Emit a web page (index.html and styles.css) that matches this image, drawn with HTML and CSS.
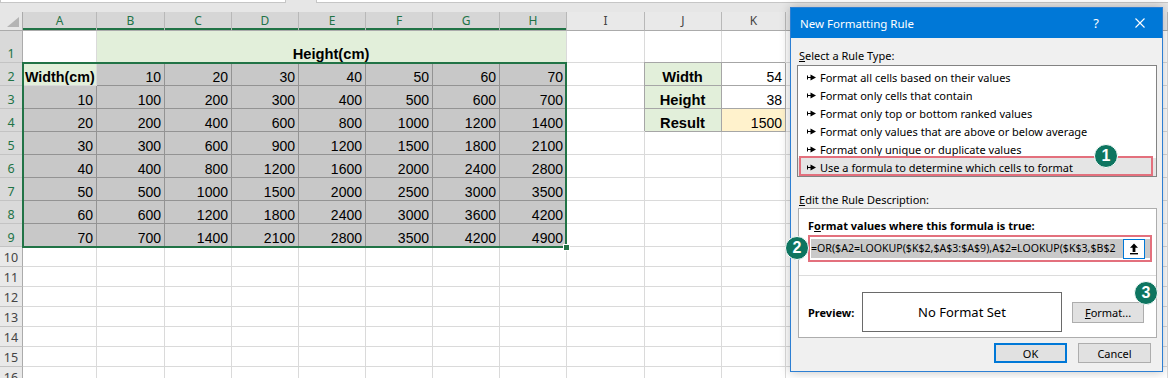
FILE: index.html
```html
<!DOCTYPE html>
<html lang="en">
<head>
    <meta charset="UTF-8">
    <meta name="viewport" content="width=device-width, initial-scale=1.0">
    <title>New Formatting Rule</title>
    <link rel="stylesheet" href="styles.css">
</head>
<body>
    <div class="top-strip">
        <div class="name-box"></div>
        <div class="formula-bar"></div>
    </div>

    <div class="sheet-wrap">
        <div id="sheet" class="sheet"></div>
        <div class="selection"><span class="fill-handle"></span></div>
    </div>

    <div class="dialog">
        <div class="title-bar">
            <span class="title">New Formatting Rule</span>
            <span class="help">?</span>
            <svg class="close" width="10" height="10" viewBox="0 0 10 10">
                <path d="M0.5 0.5 L9.5 9.5 M9.5 0.5 L0.5 9.5" stroke="#fff" stroke-width="1.1" fill="none"/>
            </svg>
        </div>

        <div class="dialog-body">
            <div class="label"><u>S</u>elect a Rule Type:</div>
            <ul class="rule-list">
                <li><svg class="arrow" width="9" height="7" viewBox="0 0 9 7"><path d="M0 1.5 H1 V5.5 H0 Z M1 3 H4 V4 H1 Z M3.5 0.5 L9 3.5 L3.5 6.5 Z" fill="#000"/></svg>Format all cells based on their values</li>
                <li><svg class="arrow" width="9" height="7" viewBox="0 0 9 7"><path d="M0 1.5 H1 V5.5 H0 Z M1 3 H4 V4 H1 Z M3.5 0.5 L9 3.5 L3.5 6.5 Z" fill="#000"/></svg>Format only cells that contain</li>
                <li><svg class="arrow" width="9" height="7" viewBox="0 0 9 7"><path d="M0 1.5 H1 V5.5 H0 Z M1 3 H4 V4 H1 Z M3.5 0.5 L9 3.5 L3.5 6.5 Z" fill="#000"/></svg>Format only top or bottom ranked values</li>
                <li><svg class="arrow" width="9" height="7" viewBox="0 0 9 7"><path d="M0 1.5 H1 V5.5 H0 Z M1 3 H4 V4 H1 Z M3.5 0.5 L9 3.5 L3.5 6.5 Z" fill="#000"/></svg>Format only values that are above or below average</li>
                <li><svg class="arrow" width="9" height="7" viewBox="0 0 9 7"><path d="M0 1.5 H1 V5.5 H0 Z M1 3 H4 V4 H1 Z M3.5 0.5 L9 3.5 L3.5 6.5 Z" fill="#000"/></svg>Format only unique or duplicate values</li>
                <li class="selected"><svg class="arrow" width="9" height="7" viewBox="0 0 9 7"><path d="M0 1.5 H1 V5.5 H0 Z M1 3 H4 V4 H1 Z M3.5 0.5 L9 3.5 L3.5 6.5 Z" fill="#000"/></svg>Use a formula to determine which cells to format</li>
            </ul>

            <div class="label second"><u>E</u>dit the Rule Description:</div>
            <div class="desc-box">
                <div class="desc-title">F<u>o</u>rmat values where this formula is true:</div>
                <div class="formula-frame">
                    <div class="formula-input">
                        <span class="formula-text">=OR($A2=LOOKUP($K$2,$A$3:$A$9),A$2=LOOKUP($K$3,$B$2</span>
                        <button class="ref-btn">
                            <svg width="10" height="12" viewBox="0 0 10 12">
                                <path d="M5 0.5 L1 4.8 H3.6 V9 H6.4 V4.8 H9 Z" fill="#000"/>
                                <rect x="1" y="10" width="8" height="1.4" fill="#000"/>
                            </svg>
                        </button>
                    </div>
                </div>
                <div class="desc-line"></div>
                <div class="preview-row">
                    <span class="preview-label">Preview:</span>
                    <div class="preview-box">No Format Set</div>
                    <button class="btn format-btn"><u>F</u>ormat...</button>
                </div>
            </div>

            <div class="dialog-buttons">
                <button class="btn ok-btn">OK</button>
                <button class="btn">Cancel</button>
            </div>
        </div>

        <!-- callouts drawn over the dialog -->
        <div class="mark-box"></div>
        <span class="badge badge-1">1</span>
        <span class="badge badge-2">2</span>
        <span class="badge badge-3">3</span>
    </div>

    <script>
        const sheet = document.getElementById('sheet');
        const letters = ['A', 'B', 'C', 'D', 'E', 'F', 'G', 'H', 'I', 'J', 'K', ''];
        const lookupTable = {
            2: ['Width', 54],
            3: ['Height', 38],
            4: ['Result', 1500]
        };

        function addCell(className, text) {
            const cell = document.createElement('div');
            cell.className = 'cell ' + className;
            if (text !== undefined) cell.textContent = text;
            sheet.appendChild(cell);
            return cell;
        }

        // column headers
        addCell('corner');
        letters.forEach((letter, i) => addCell(i < 8 ? 'col-head sel' : 'col-head', letter));

        // row 1: merged title
        addCell('row-head sel', 1);
        addCell('');
        addCell('merged', 'Height(cm)');
        for (let i = 0; i < 4; i++) addCell('');

        // rows 2-9: the table
        for (let r = 2; r <= 9; r++) {
            const rowValue = (r - 2) * 10;
            addCell('row-head sel', r);
            if (r === 2) addCell('label-cell', 'Width(cm)');
            else addCell('data', rowValue);
            for (let c = 1; c <= 7; c++) {
                addCell('data', r === 2 ? c * 10 : rowValue * c * 10);
            }
            addCell('');
            if (lookupTable[r]) {
                addCell('jk-label', lookupTable[r][0]);
                addCell(r === 4 ? 'jk-value result' : 'jk-value', lookupTable[r][1]);
            } else {
                addCell('');
                addCell('');
            }
            addCell('');
        }

        // empty rows (16 is cut by the window edge)
        for (let r = 10; r <= 16; r++) {
            addCell('row-head', r);
            for (let c = 0; c < 12; c++) addCell('');
        }
    </script>
</body>
</html>
```

FILE: styles.css
```css
body {
    margin: 0;
    width: 1168px;
    height: 378px;
    overflow: hidden;
    position: relative;
    background-color: #fff;
    font-family: "Liberation Sans", Arial, sans-serif;
}

/* Excel chrome */
.top-strip {
    height: 12px;
    background-color: #e6e6e6;
    display: flex;
    gap: 30px;
}
.name-box,
.formula-bar {
    height: 2px;
    background-color: #fff;
    border: 1px solid #c6c6c6;
    border-top: none;
}
.name-box {
    width: 284px;
}
.formula-bar {
    flex: 1;
    border-right: none;
}

.sheet-wrap {
    position: relative;
}
.sheet {
    display: grid;
    grid-template-columns: 23px 74px 68px repeat(6, 67px) 78px 77px 64px 1fr;
    grid-template-rows: 19px 32px repeat(8, 23px) repeat(7, 20px);
}
.cell {
    box-sizing: border-box;
    border-right: 1px solid #dadada;
    border-bottom: 1px solid #dadada;
    display: flex;
    align-items: flex-end;
    justify-content: flex-end;
    padding: 0 3px 0 2px;
    font-size: 14px;
    line-height: 16px;
    color: #000;
    white-space: nowrap;
    overflow: hidden;
}
.corner {
    background-color: #e6e6e6;
    border-right-color: #ababab;
    border-bottom-color: #ababab;
    padding: 0 3px 3px 0;
}
.corner::after {
    content: "";
    width: 12px;
    height: 10px;
    background-color: #b4b4b4;
    clip-path: polygon(100% 0, 100% 100%, 0 100%);
}
.col-head {
    background-color: #e9e9e9;
    border-right-color: #b8b8b8;
    border-bottom-color: #ababab;
    justify-content: center;
    align-items: center;
    padding: 0;
    font-family: "Noto Sans", sans-serif;
    font-size: 12px;
    color: #444;
}
.col-head.sel {
    background-color: #d6d6d6;
    color: #217346;
    box-shadow: inset 0 -2px 0 #217346;
}
.row-head {
    background-color: #e9e9e9;
    border-right-color: #ababab;
    border-bottom-color: #c3c3c3;
    justify-content: center;
    padding: 0;
    font-family: "Noto Sans", sans-serif;
    font-size: 12.5px;
    color: #444;
}
.row-head.sel {
    background-color: #d9d9d9;
    color: #217346;
}
.data {
    background-color: #c8c8c8;
    border-color: #939393;
}
.label-cell {
    background-color: #e2efda;
    justify-content: flex-start;
    padding: 0 0 0 2px;
    font-weight: bold;
    font-size: 14.3px;
}
.merged {
    grid-column: span 7;
    background-color: #e2efda;
    justify-content: center;
    font-weight: bold;
    font-size: 14.7px;
}
.jk-label,
.jk-value {
    border-color: #a6a6a6;
    box-shadow: -1px -1px 0 #a6a6a6;
}
.jk-label {
    background-color: #e2efda;
    justify-content: center;
    font-weight: bold;
    font-size: 14.7px;
}
.jk-value.result {
    background-color: #fff2cc;
}

.selection {
    position: absolute;
    left: 22px;
    top: 50px;
    width: 545px;
    height: 186px;
    box-sizing: border-box;
    border: 2px solid #217346;
}
.fill-handle {
    position: absolute;
    right: -5px;
    bottom: -5px;
    width: 5px;
    height: 5px;
    background-color: #217346;
    border: 1px solid #fff;
}

/* Dialog */
.dialog {
    position: absolute;
    left: 790px;
    top: 7px;
    width: 373px;
    height: 365px;
    box-sizing: border-box;
    border: 1px solid #2d7fd3;
    background-color: #f0f0f0;
    box-shadow: 0 0 10px rgba(0, 0, 0, 0.25);
    font-family: "Noto Sans", sans-serif;
    font-size: 11px;
    color: #000;
}
.title-bar {
    height: 30px;
    background-color: #0078d7;
    color: #fff;
    display: flex;
    align-items: center;
    padding-left: 9px;
}
.title {
    flex: 1;
    font-size: 11.5px;
}
.help {
    font-size: 13px;
    margin-right: 36px;
}
.close {
    margin-right: 17px;
}
.dialog-body {
    padding: 0 5px 0 6px;
}
.label {
    padding: 10px 0 0 2px;
    line-height: 15px;
    margin-bottom: 2px;
}
.label.second {
    padding-top: 15px;
    margin-bottom: 1px;
}
.rule-list {
    list-style: none;
    margin: 0;
    padding: 2px 0 0;
    height: 112px;
    box-sizing: border-box;
    border: 1px solid #828282;
    background-color: #fff;
}
.rule-list li {
    height: 18px;
    display: flex;
    align-items: center;
    gap: 4px;
    padding-left: 9px;
    white-space: nowrap;
}
.rule-list li.selected {
    background-color: #e5e5e5;
}
.desc-box {
    margin-left: 1px;
    border: 1px solid #adadad;
    background-color: #fff;
    padding: 9px 0 5px 9px;
}
.desc-title {
    font-weight: bold;
    line-height: 15px;
}
.formula-frame {
    margin-top: 2px;
    width: 344px;
    height: 27px;
    box-sizing: border-box;
    border: 2px solid #e3707d;
    padding: 2px 0 2px 1px;
}
.formula-input {
    height: 100%;
    background-color: #c9c9c9;
    display: flex;
    align-items: center;
}
.formula-text {
    flex: 1;
    white-space: nowrap;
    overflow: hidden;
    font-size: 10.6px;
    line-height: 19px;
}
.ref-btn {
    width: 22px;
    height: 20px;
    margin: 0 5px 0 2px;
    padding: 0;
    border: 1px solid #0078d7;
    background-color: #fff;
    display: flex;
    align-items: center;
    justify-content: center;
}
.desc-line {
    height: 1px;
    margin: 13px 0 0 -9px;
    background-color: #dcdcdc;
}
.preview-row {
    display: flex;
    align-items: center;
    height: 40px;
    margin-top: 16px;
}
.preview-label {
    width: 54px;
    font-weight: bold;
}
.preview-box {
    width: 200px;
    height: 40px;
    box-sizing: border-box;
    border: 1px solid #6a6a6a;
    display: flex;
    align-items: center;
    justify-content: center;
    font-size: 13px;
}
.btn {
    box-sizing: border-box;
    padding: 0;
    font-family: "Noto Sans", sans-serif;
    font-size: 11px;
    color: #000;
    background-color: #e1e1e1;
    border: 1px solid #adadad;
}
.format-btn {
    width: 72px;
    height: 21px;
    margin-left: 10px;
}
.dialog-buttons {
    display: flex;
    justify-content: flex-end;
    gap: 11px;
    margin-top: 5px;
    padding-right: 6px;
}
.dialog-buttons .btn {
    width: 73px;
    height: 20px;
}
.dialog-buttons .ok-btn {
    border: 2px solid #0078d7;
}

/* Callouts */
.mark-box {
    position: absolute;
    left: 8px;
    top: 148px;
    width: 354px;
    height: 20px;
    box-sizing: border-box;
    border: 2px solid #e3707d;
}
.badge {
    position: absolute;
    width: 24px;
    height: 24px;
    box-sizing: border-box;
    border-radius: 50%;
    border: 1.5px solid #fff;
    background-color: #0e7560;
    color: #fff;
    font-family: "Liberation Sans", Arial, sans-serif;
    font-weight: bold;
    font-size: 16px;
    display: flex;
    align-items: center;
    justify-content: center;
}
.badge-1 {
    left: 303px;
    top: 136px;
}
.badge-2 {
    left: -6px;
    top: 228px;
}
.badge-3 {
    left: 343px;
    top: 273px;
}
```
